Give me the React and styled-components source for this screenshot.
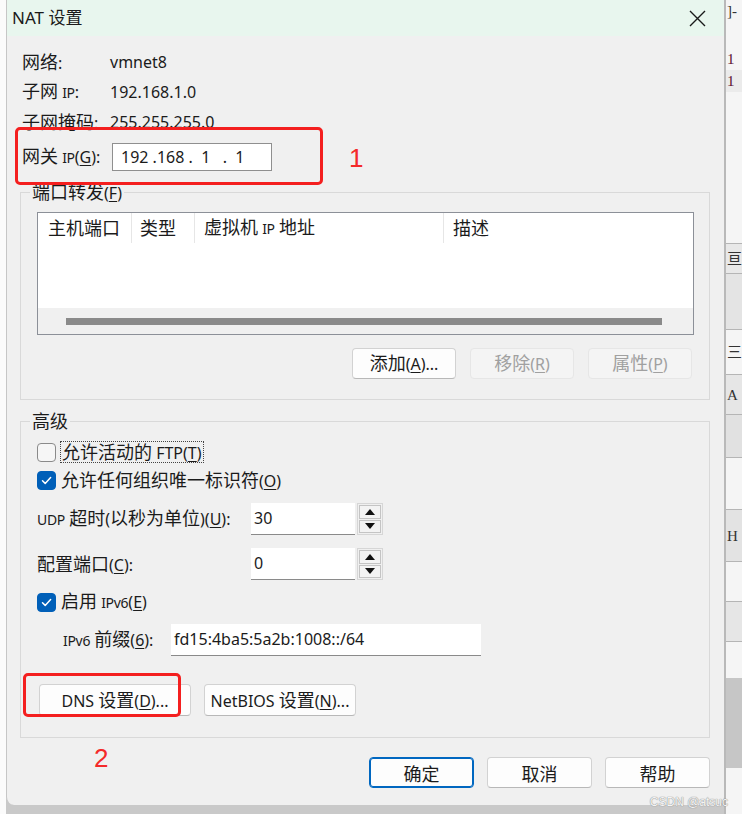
import React from "react";
import styled, { createGlobalStyle } from "styled-components";

const GlobalStyle = createGlobalStyle`
  html, body {
    margin: 0;
    padding: 0;
    background: #ffffff;
  }
  body {
    font-family: "Noto Sans", "Noto Sans CJK SC", sans-serif;
    color: #1b1b1b;
  }
  * {
    box-sizing: border-box;
  }
`;

const Screen = styled.div`
  position: relative;
  width: 742px;
  height: 814px;
  overflow: hidden;
  display: grid;
  grid-template-columns: 6px 718px 18px;
  background: #fafafa;
`;

const LeftEdge = styled.div`
  background: #fbfbfb;
`;

const Center = styled.div`
  display: flex;
  flex-direction: column;
  background: #c9c9c9;
`;

const Dialog = styled.div`
  height: 805px;
  display: flex;
  flex-direction: column;
  background: #f0f0f0;
  border-left: 1px solid #c6c6c6;
  border-bottom-left-radius: 8px;
  border-bottom-right-radius: 8px;
  overflow: hidden;
`;

const TitleBar = styled.div`
  height: 36px;
  flex: 0 0 36px;
  display: flex;
  align-items: center;
  justify-content: space-between;
  background: #e8f6ee;
  padding-left: 5px;
`;

const Title = styled.div`
  font-size: 17px;
  line-height: 22px;
  color: #1a1a1a;
`;

const CloseButton = styled.div`
  width: 54px;
  height: 36px;
  display: flex;
  align-items: center;
  justify-content: center;
`;

const Body = styled.div`
  flex: 1;
  display: flex;
  flex-direction: column;
  padding: 11px 14px 0 13px;
`;

const InfoGrid = styled.div`
  display: grid;
  grid-template-columns: 88px auto;
  grid-auto-rows: 30px;
  align-items: center;
  margin-left: 2px;
  font-size: 16px;
  line-height: 20px;
`;

/* CJK glyphs in the dialog are drawn a little larger than the Latin text */
const Han = styled.span`
  font-family: "Noto Sans CJK SC", sans-serif;
  font-size: 18px;
  line-height: 1;
`;

const Small = styled.span`
  font-size: 14px;
  letter-spacing: -0.3px;
`;

const Key = styled.u`
  text-decoration: underline;
  text-underline-offset: 2px;
  text-decoration-thickness: 1px;
`;

const CJK = /([\u3000-\u9fff\uff00-\uffef]+)/;

const L = ({ children }) => (
  <>
    {React.Children.map(children, (child) =>
      typeof child === "string"
        ? child
            .split(CJK)
            .map((part, i) => (CJK.test(part) ? <Han key={i}>{part}</Han> : part))
        : child
    )}
  </>
);

const GatewayRow = styled.div`
  display: flex;
  align-items: center;
  height: 28px;
  margin: 6px 0 0 2px;
  font-size: 16px;
  line-height: 20px;
`;

const GatewayLabel = styled.div`
  width: 90px;
  white-space: nowrap;
`;

const IpBox = styled.div`
  width: 160px;
  height: 28px;
  display: flex;
  align-items: center;
  padding-left: 8px;
  background: #ffffff;
  border: 1px solid #8f8f8f;
  white-space: pre;
  font-size: 16px;
`;

const Group = styled.fieldset`
  margin: ${({ $gap }) => $gap}px 0 0 0;
  padding: ${({ $top }) => $top}px 15px ${({ $bottom }) => $bottom}px 16px;
  border: 1px solid #d9d9d9;
  min-width: 0;
  display: flex;
  flex-direction: column;
`;

const Legend = styled.legend`
  height: 20px;
  margin-left: -7px;
  padding: 0 2px;
  font-size: 16px;
  line-height: 20px;
  white-space: pre;
`;

const ListView = styled.div`
  height: 123px;
  display: flex;
  flex-direction: column;
  background: #ffffff;
  border: 1px solid #8c9098;
`;

const ListHeader = styled.div`
  height: 30px;
  flex: 0 0 30px;
  display: grid;
  grid-template-columns: 94px 63px 249px 1fr;
  font-size: 16px;
  line-height: 20px;
`;

const HeaderCell = styled.div`
  display: flex;
  align-items: center;
  white-space: pre;
  padding-left: ${({ $pad }) => $pad}px;
  border-right: ${({ $last }) => ($last ? "none" : "1px solid #e6e6e6")};
`;

const ListBody = styled.div`
  flex: 1;
`;

const HScroll = styled.div`
  height: 26px;
  flex: 0 0 26px;
  display: flex;
  align-items: center;
  padding: 0 31px 0 28px;
  background: #f0f0f0;
`;

const Thumb = styled.div`
  flex: 1;
  height: 7px;
  background: #8a8a8a;
`;

const ButtonRow = styled.div`
  display: flex;
  justify-content: ${({ $end }) => ($end ? "flex-end" : "flex-start")};
  gap: ${({ $gap }) => $gap}px;
  margin-top: ${({ $top }) => $top}px;
  padding: 0 ${({ $right }) => $right || 0}px 0 ${({ $left }) => $left || 0}px;
`;

const Button = styled.div`
  width: ${({ $w }) => $w}px;
  height: ${({ $h }) => $h}px;
  flex: none;
  display: flex;
  align-items: center;
  justify-content: center;
  white-space: pre;
  font-size: 16px;
  line-height: 20px;
  border-radius: 4px;
  color: ${({ $disabled }) => ($disabled ? "#a0a0a0" : "#1b1b1b")};
  background: ${({ $disabled }) => ($disabled ? "#f4f4f4" : "#fdfdfd")};
  border: 1px solid
    ${({ $primary, $disabled }) =>
      $primary ? "#0067c0" : $disabled ? "#e6e6e6" : "#d2d2d2"};
  border-bottom-color: ${({ $primary, $disabled }) =>
    $primary ? "#0067c0" : $disabled ? "#e6e6e6" : "#b8b8b8"};
  box-shadow: ${({ $primary }) => ($primary ? "inset 0 0 0 1px #0067c0" : "none")};
`;

const CheckRow = styled.div`
  height: ${({ $h }) => $h}px;
  display: flex;
  align-items: center;
  gap: 5px;
  margin-top: ${({ $top }) => $top || 0}px;
  font-size: 16px;
  line-height: 20px;
  white-space: pre;
`;

const Box = styled.div`
  width: 19px;
  height: 19px;
  flex: 0 0 19px;
  border-radius: 4px;
  display: flex;
  align-items: center;
  justify-content: center;
  background: ${({ $checked }) => ($checked ? "#005fb8" : "#f6f6f6")};
  border: 1px solid ${({ $checked }) => ($checked ? "#005fb8" : "#8a8a8a")};
`;

const FocusLabel = styled.span`
  border: 1px dotted #444;
  padding: 0 1px;
  line-height: 18px;
  margin-left: -1px;
`;

const FieldRow = styled.div`
  height: 32px;
  display: flex;
  align-items: center;
  margin-top: ${({ $top }) => $top}px;
  margin-left: ${({ $indent }) => $indent || 0}px;
  font-size: 16px;
  line-height: 20px;
`;

const FieldLabel = styled.div`
  width: ${({ $w }) => $w}px;
  flex: 0 0 ${({ $w }) => $w}px;
  white-space: pre;
`;

const TextField = styled.div`
  width: ${({ $w }) => $w}px;
  height: 32px;
  padding: 4px 4px 0 3px;
  background: #ffffff;
  border-bottom: 1px solid #8a8a8a;
  font-size: 16px;
  line-height: 22px;
`;

const Spinner = styled.div`
  width: 26px;
  height: 32px;
  margin-left: 2px;
  padding: 1px;
  display: flex;
  flex-direction: column;
  gap: 1px;
  border: 1px solid #d6d6d6;
  background: #f0f0f0;
`;

const SpinHalf = styled.div`
  flex: 1;
  display: flex;
  align-items: center;
  justify-content: center;
  background: #f3f3f3;
  border: 1px solid #c4c4c4;
`;

const RedBox = styled.div`
  position: absolute;
  left: ${({ $x }) => $x}px;
  top: ${({ $y }) => $y}px;
  width: ${({ $w }) => $w}px;
  height: ${({ $h }) => $h}px;
  border: 3px solid #f41f1f;
  border-radius: 5px;
  pointer-events: none;
`;

const RedNumber = styled.div`
  position: absolute;
  left: ${({ $x }) => $x}px;
  top: ${({ $y }) => $y}px;
  font-family: "Liberation Sans", "Noto Sans", sans-serif;
  font-size: 26px;
  line-height: 30px;
  color: #f42a2a;
`;

const Watermark = styled.div`
  position: absolute;
  right: 14px;
  bottom: 5px;
  font-family: "Liberation Sans", sans-serif;
  font-size: 12px;
  line-height: 14px;
  color: #f4f4f4;
  text-shadow: 0 0 1px #8a8a8a, 0 0 1px #8a8a8a;
`;

const BottomShade = styled.div`
  flex: 1;
  background: #c9c9c9;
`;

const RightEdge = styled.div`
  display: flex;
  flex-direction: column;
  border-left: 2px solid #b9b9b9;
  background: #f5f5f5;
  overflow: hidden;
  font-family: "Liberation Serif", "Noto Sans CJK SC", serif;
  font-size: 15px;
  line-height: 20px;
`;

const EdgeRow = styled.div`
  height: ${({ $h }) => $h}px;
  flex: 0 0 ${({ $h }) => $h}px;
  padding-left: 1px;
  background: ${({ $bg }) => $bg || "transparent"};
  border-bottom: ${({ $line }) => ($line ? "1px solid #b5b5b5" : "none")};
  color: ${({ $color }) => $color || "#333"};
  white-space: nowrap;
  display: flex;
  align-items: center;
`;

const CloseIcon = () => (
  <svg width="17" height="17" viewBox="0 0 17 17">
    <path d="M1 1 L16 16 M16 1 L1 16" stroke="#1a1a1a" strokeWidth="1.4" fill="none" />
  </svg>
);

const CheckMark = () => (
  <svg width="13" height="13" viewBox="0 0 13 13">
    <path d="M2.5 6.8 L5.2 9.4 L10.6 3.6" stroke="#ffffff" strokeWidth="1.5" fill="none" strokeLinecap="round" strokeLinejoin="round" />
  </svg>
);

const Arrow = ({ up }) => (
  <svg width="10" height="6" viewBox="0 0 10 6">
    <path d={up ? "M0 6 L5 0 L10 6 Z" : "M0 0 L5 6 L10 0 Z"} fill="#111" />
  </svg>
);

const Check = ({ checked }) => <Box $checked={checked}>{checked && <CheckMark />}</Box>;

const SpinField = ({ value }) => (
  <>
    <TextField $w={104}>{value}</TextField>
    <Spinner>
      <SpinHalf>
        <Arrow up />
      </SpinHalf>
      <SpinHalf>
        <Arrow />
      </SpinHalf>
    </Spinner>
  </>
);

const columns = [
  { label: <L>主机端口</L>, pad: 10 },
  { label: <L>类型</L>, pad: 8 },
  { label: <L>虚拟机 <Small>IP</Small> 地址</L>, pad: 9 },
  { label: <L>描述</L>, pad: 9, last: true },
];

const App = () => {
  return (
    <>
      <GlobalStyle />
      <Screen>
        <LeftEdge />
        <Center>
          <Dialog>
            <TitleBar>
              <Title>NAT 设置</Title>
              <CloseButton>
                <CloseIcon />
              </CloseButton>
            </TitleBar>
            <Body>
              <InfoGrid>
                <div><L>网络:</L></div>
                <div>vmnet8</div>
                <div><L>子网 <Small>IP</Small>:</L></div>
                <div>192.168.1.0</div>
                <div><L>子网掩码:</L></div>
                <div>255.255.255.0</div>
              </InfoGrid>
              <GatewayRow>
                <GatewayLabel>
                  <L>网关 <Small>IP</Small>(<Key>G</Key>):</L>
                </GatewayLabel>
                <IpBox>{"192 .168 .  1   .  1"}</IpBox>
              </GatewayRow>

              <Group $gap={11} $top={10} $bottom={20}>
                <Legend>
                  <L>端口转发(<Key>F</Key>)</L>
                </Legend>
                <ListView>
                  <ListHeader>
                    {columns.map((col, index) => (
                      <HeaderCell key={index} $pad={col.pad} $last={col.last}>
                        <span>{col.label}</span>
                      </HeaderCell>
                    ))}
                  </ListHeader>
                  <ListBody />
                  <HScroll>
                    <Thumb />
                  </HScroll>
                </ListView>
                <ButtonRow $end $gap={14} $top={13} $right={2}>
                  <Button $w={104} $h={31}>
                    <span><L>添加(<Key>A</Key>)...</L></span>
                  </Button>
                  <Button $w={104} $h={31} $disabled>
                    <span><L>移除(<Key>R</Key>)</L></span>
                  </Button>
                  <Button $w={104} $h={31} $disabled>
                    <span><L>属性(<Key>P</Key>)</L></span>
                  </Button>
                </ButtonRow>
              </Group>

              <Group $gap={11} $top={7} $bottom={21}>
                <Legend>
                  <L>高级</L>
                </Legend>
                <CheckRow $h={28}>
                  <Check />
                  <FocusLabel>
                    <L>允许活动的 FTP(<Key>T</Key>)</L>
                  </FocusLabel>
                </CheckRow>
                <CheckRow $h={29}>
                  <Check checked />
                  <span>
                    <L>允许任何组织唯一标识符(<Key>O</Key>)</L>
                  </span>
                </CheckRow>
                <FieldRow $top={8}>
                  <FieldLabel $w={214}>
                    <L><Small>UDP</Small> 超时(以秒为单位)(<Key>U</Key>):</L>
                  </FieldLabel>
                  <SpinField value="30" />
                </FieldRow>
                <FieldRow $top={13}>
                  <FieldLabel $w={214}>
                    <L>配置端口(<Key>C</Key>):</L>
                  </FieldLabel>
                  <SpinField value="0" />
                </FieldRow>
                <CheckRow $h={28} $top={8}>
                  <Check checked />
                  <span>
                    <L>启用 <Small>IPv6</Small>(<Key>E</Key>)</L>
                  </span>
                </CheckRow>
                <FieldRow $top={8} $indent={26}>
                  <FieldLabel $w={108}>
                    <L><Small>IPv6</Small> 前缀(<Key>6</Key>):</L>
                  </FieldLabel>
                  <TextField $w={310}>fd15:4ba5:5a2b:1008::/64</TextField>
                </FieldRow>
                <ButtonRow $gap={13} $top={28} $left={2}>
                  <Button $w={152} $h={32}>
                    <span><L>DNS 设置(<Key>D</Key>)...</L></span>
                  </Button>
                  <Button $w={152} $h={32}>
                    <span><L>NetBIOS 设置(<Key>N</Key>)...</L></span>
                  </Button>
                </ButtonRow>
              </Group>

              <ButtonRow $end $gap={13} $top={19}>
                <Button $w={105} $h={31} $primary>
                  <L>确定</L>
                </Button>
                <Button $w={105} $h={31}>
                  <L>取消</L>
                </Button>
                <Button $w={105} $h={31}>
                  <L>帮助</L>
                </Button>
              </ButtonRow>
            </Body>
          </Dialog>
          <BottomShade />
        </Center>
        <RightEdge>
          <EdgeRow $h={22}>]-</EdgeRow>
          <EdgeRow $h={26} />
          <EdgeRow $h={22} $color="#5a1030">1</EdgeRow>
          <EdgeRow $h={22} $bg="#ebebeb" $color="#5a1030">1</EdgeRow>
          <EdgeRow $h={152} $line />
          <EdgeRow $h={30} $bg="#e8e8e8" $line>亘</EdgeRow>
          <EdgeRow $h={56} $bg="#e4e4e4" $line />
          <EdgeRow $h={45} $line>三</EdgeRow>
          <EdgeRow $h={40} $bg="#e6e6e6" $line>A</EdgeRow>
          <EdgeRow $h={43} $bg="#e1e1e1" $line />
          <EdgeRow $h={52} $line />
          <EdgeRow $h={52} $bg="#e3e3e3" $line>H</EdgeRow>
          <EdgeRow $h={40} $line />
          <EdgeRow $h={40} $bg="#e6e6e6" $line />
          <EdgeRow $h={36} />
          <EdgeRow $h={90} $bg="#c6c6c6" />
        </RightEdge>
        <RedBox $x={15} $y={127} $w={308} $h={58} />
        <RedNumber $x={349} $y={143}>1</RedNumber>
        <RedBox $x={23} $y={673} $w={158} $h={44} />
        <RedNumber $x={94} $y={743}>2</RedNumber>
        <Watermark>CSDN @atsuc</Watermark>
      </Screen>
    </>
  );
};

export default App;
